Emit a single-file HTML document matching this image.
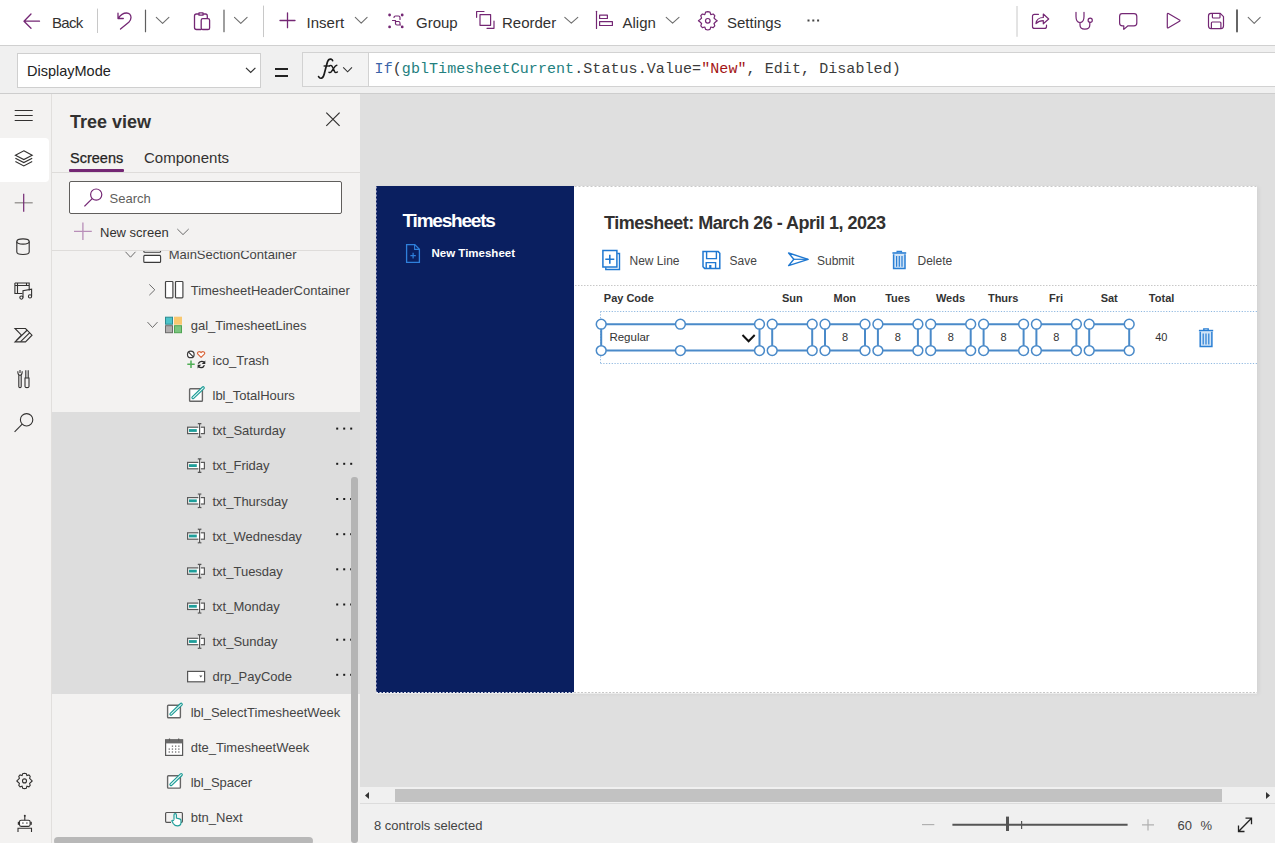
<!DOCTYPE html>
<html><head><meta charset="utf-8">
<style>
*{box-sizing:border-box;margin:0;padding:0}
html,body{width:1275px;height:843px;overflow:hidden;background:#fff;font-family:"Liberation Sans",sans-serif;color:#323130}
.a{position:absolute}
.t{position:absolute;white-space:pre;line-height:1}
svg{position:absolute;overflow:visible}
</style></head><body>

<!-- ===== TOP TOOLBAR ===== -->
<div class="a" style="left:0;top:0;width:1275px;height:46px;background:#fff;border-bottom:1px solid #d0d0d0"></div>

<div class="t" style="left:52px;top:15.3px;font-size:15px;color:#323130;letter-spacing:-0.7px">Back</div>
<svg style="left:0;top:0" width="1275" height="45" fill="none" stroke-linecap="round" stroke-linejoin="round">
 <g stroke="#742774" stroke-width="1.3">
  <path d="M24 21.2H39.5M31 14L24 21.2L31 28.3"/>
  <path d="M118 13.2V18.5H123.3M118.3 18.3C120.5 14.8 123.6 13 126.6 13C129.2 13 131 15 131 17.5C131 19.5 130 21 128.8 22.2L120.5 29"/>
  <path d="M198.5 14H196.5Q194.5 14 194.5 16V27.5Q194.5 29.5 196.5 29.5H201M203.5 14H205.5Q207.3 14 207.3 16V18.4M199 12.8H203V15.2H199Z"/>
  <rect x="201.2" y="18.6" width="8.4" height="10.9" rx="1.6"/>
  <path d="M280 20.5H295M287.5 12.8V27.7"/>
 </g>
 <g stroke="#742774" stroke-width="1.2">
  <path d="M394 17.5Q394 16 395.5 16H398.5Q400 16 400 17.5V19.5M396 21.5H398.5Q400 21.5 400 23V25M392.5 20.5H395.5V23.5Q395.5 25 397 25H400.5"/>
  <rect x="480" y="14.6" width="10.6" height="10.7"/>
  <path d="M476.6 17.3V11.5H484M494 21V28.3H487"/>
  <path d="M596.5 11.3V28.5"/>
  <rect x="599.6" y="15.2" width="7.8" height="3.3"/>
  <rect x="599.6" y="21.6" width="12.8" height="3.9"/>
 </g>
 <g fill="#742774" stroke="none">
  <circle cx="389.6" cy="15" r="1.4"/><circle cx="402.2" cy="15" r="1.4"/><circle cx="389.6" cy="26.9" r="1.4"/><circle cx="402.2" cy="26.9" r="1.4"/>
 </g>
 <g stroke="#6e6e6e" stroke-width="1.1">
  <path d="M156.3 17.3L162.6 23.4L168.9 17.3"/>
  <path d="M234.5 17.3L240.8 23.4L247.1 17.3"/>
  <path d="M355.3 17.3L361.2 23.2L367.1 17.3"/>
  <path d="M564.8 17.3L571.3 23.2L577.8 17.3"/>
  <path d="M666.2 17.3L672.6 23.2L679 17.3"/>
  <path d="M1248.2 17.3L1254.2 23.3L1260.2 17.3"/>
 </g>
 <g stroke="#742774" stroke-width="1.2">
  <path d="M707.8 11.6L710 12.2L710.8 14.6L713.2 14L714.8 15.7L714 18.1L715.8 19.8L717.2 20.8L715.8 21.8L714 23.5L714.8 25.9L713.2 27.6L710.8 27L710 29.4L707.8 30L705.6 29.4L704.8 27L702.4 27.6L700.8 25.9L701.6 23.5L699.8 21.8L698.4 20.8L699.8 19.8L701.6 18.1L700.8 15.7L702.4 14L704.8 14.6L705.6 12.2Z"/>
  <circle cx="707.8" cy="20.8" r="2.3"/>
 </g>
 <g fill="#444"><rect x="807.5" y="19.5" width="2" height="2"/><rect x="812.3" y="19.5" width="2" height="2"/><rect x="817.1" y="19.5" width="2" height="2"/></g>
 <g stroke="#c8c8c8" stroke-width="1"><path d="M97.5 9V32.6M263.5 6V36.7M1017 6.4V36.4"/></g>
 <g stroke="#5f5f5f" stroke-width="1.2"><path d="M145.5 10V31.7M224 10V31.7"/></g>
 <path d="M1237 10.2V31.4" stroke="#666" stroke-width="2"/>
 <g stroke="#742774" stroke-width="1.2">
  <path d="M1038.5 14.3H1034.5Q1032.5 14.3 1032.5 16.3V26.4Q1032.5 28.4 1034.5 28.4H1044.5Q1046.5 28.4 1046.5 26.4V25"/>
  <path d="M1036 23.5C1036.5 19.5 1039.5 17.5 1043.3 17.5V14L1048.7 19L1043.3 23.8V20.6C1040.5 20.6 1038 21.5 1036 23.5Z"/>
  <path d="M1076 12.3V16.5Q1076 22.5 1080 22.5Q1084 22.5 1084 16.5V12.3M1080 22.5V25Q1080 29.2 1084.8 29.2Q1089.8 29.2 1089.8 25V22.2"/>
  <circle cx="1090.2" cy="20.2" r="2.1"/>
  <path d="M1122 13.6H1134Q1136.8 13.6 1136.8 16.4V23Q1136.8 25.8 1134 25.8H1128L1123.8 29.4V25.8H1122.4Q1119.6 25.8 1119.6 23V16.4Q1119.6 13.6 1122 13.6Z"/>
  <path d="M1167.3 15V27.2Q1167.3 28.4 1168.4 27.8L1179.5 21.3Q1180.5 20.6 1179.5 19.9L1168.4 13.6Q1167.3 13 1167.3 14.2Z"/>
  <path d="M1211 13.4H1220.3L1223.5 16.6V26.1Q1223.5 28.6 1221 28.6H1211Q1208.5 28.6 1208.5 26.1V15.9Q1208.5 13.4 1211 13.4Z"/>
  <path d="M1212.4 13.6V17.2Q1212.4 18 1213.2 18H1219.2Q1220 18 1220 17.2V13.6M1211.4 28.4V22.9Q1211.4 22 1212.3 22H1220Q1220.9 22 1220.9 22.9V28.4"/>
 </g>
</svg>
<div class="t" style="left:306.6px;top:15.3px;font-size:15px;color:#323130">Insert</div>
<div class="t" style="left:416px;top:15.3px;font-size:15px;color:#323130">Group</div>
<div class="t" style="left:502px;top:15.3px;font-size:15px;color:#323130">Reorder</div>
<div class="t" style="left:622.5px;top:15.3px;font-size:15px;color:#323130">Align</div>
<div class="t" style="left:727px;top:15.3px;font-size:15px;color:#323130">Settings</div>


<!-- ===== FORMULA BAR ===== -->
<div class="a" style="left:0;top:46px;width:1275px;height:48px;background:#f0f0f0;border-bottom:1px solid #cdcdcd"></div>
<div class="a" style="left:17px;top:53px;width:244px;height:35px;background:#fff;border:1px solid #cfcfcf"></div>
<div class="t" style="left:27px;top:63.8px;font-size:14.5px;color:#222">DisplayMode</div>
<div class="a" style="left:274.5px;top:67.5px;width:13.5px;height:2px;background:#222"></div>
<div class="a" style="left:274.5px;top:74.5px;width:13.5px;height:2px;background:#222"></div>
<div class="a" style="left:302px;top:52px;width:67px;height:35px;background:#f3f3f3;border:1px solid #d2d2d2"></div>
<div class="a" style="left:368px;top:52px;width:910px;height:35px;background:#fff;border:1px solid #d2d2d2"></div>
<div class="t" style="left:374.6px;top:62px;font-family:'Liberation Mono',monospace;font-size:15px;letter-spacing:0.07px;color:#3b3b3b"><span style="color:#3a64a8">If</span>(<span style="color:#23807e">gblTimesheetCurrent</span>.Status.Value=<span style="color:#a31515">"New"</span>, Edit, Disabled)</div>

<!-- ===== LEFT RAIL ===== -->
<div class="a" style="left:0;top:94px;width:52px;height:749px;background:#f3f2f1;border-right:1px solid #e1dfdd"></div>
<div class="a" style="left:0;top:138px;width:49px;height:44px;background:#fff;border-radius:0 4px 4px 0"></div>

<!-- ===== TREE PANEL ===== -->
<div class="a" style="left:52px;top:94px;width:308px;height:749px;background:#f3f2f1"></div>
<div class="t" style="left:70px;top:112.6px;font-size:18px;font-weight:700;color:#323130">Tree view</div>
<div class="t" style="left:70px;top:151px;font-size:14.5px;color:#252423;-webkit-text-stroke:0.25px #252423">Screens</div>
<div class="t" style="left:144px;top:150.4px;font-size:15px;color:#323130">Components</div>
<div class="a" style="left:69px;top:169px;width:55px;height:3px;background:#742774;border-radius:1px"></div>
<div class="a" style="left:52px;top:172px;width:308px;height:1px;background:#dedcda"></div>
<div class="a" style="left:69px;top:181px;width:273px;height:33px;background:#fff;border:1px solid #605e5c;border-radius:2px"></div>
<div class="t" style="left:109.5px;top:192.2px;font-size:13px;color:#605e5c">Search</div>
<div class="t" style="left:100px;top:226.2px;font-size:13px;color:#323130">New screen</div>
<div class="a" style="left:52px;top:250px;width:308px;height:1px;background:#dedcda"></div>

<!-- tree rows -->
<div class="a" style="left:52px;top:251px;width:308px;height:592px;overflow:hidden">
  <div class="a" style="left:0;top:161px;width:308px;height:282px;background:#dddddd"></div>
  <div class="t" style="left:116.7px;top:-2.6px;font-size:13px;color:#444">MainSectionContainer</div>
<div class="t" style="left:138.7px;top:32.6px;font-size:13px;color:#444">TimesheetHeaderContainer</div>
<div class="t" style="left:138.7px;top:67.7px;font-size:13px;color:#444">gal_TimesheetLines</div>
<div class="t" style="left:160.5px;top:102.9px;font-size:13px;color:#444">ico_Trash</div>
<div class="t" style="left:160.5px;top:138.1px;font-size:13px;color:#444">lbl_TotalHours</div>
<div class="t" style="left:160.5px;top:173.2px;font-size:13px;color:#444">txt_Saturday</div>
<div class="t" style="left:160.5px;top:208.4px;font-size:13px;color:#444">txt_Friday</div>
<div class="t" style="left:160.5px;top:243.6px;font-size:13px;color:#444">txt_Thursday</div>
<div class="t" style="left:160.5px;top:278.8px;font-size:13px;color:#444">txt_Wednesday</div>
<div class="t" style="left:160.5px;top:313.9px;font-size:13px;color:#444">txt_Tuesday</div>
<div class="t" style="left:160.5px;top:349.1px;font-size:13px;color:#444">txt_Monday</div>
<div class="t" style="left:160.5px;top:384.3px;font-size:13px;color:#444">txt_Sunday</div>
<div class="t" style="left:160.5px;top:419.4px;font-size:13px;color:#444">drp_PayCode</div>
<div class="t" style="left:138.7px;top:454.6px;font-size:13px;color:#444">lbl_SelectTimesheetWeek</div>
<div class="t" style="left:138.7px;top:489.8px;font-size:13px;color:#444">dte_TimesheetWeek</div>
<div class="t" style="left:138.7px;top:524.9px;font-size:13px;color:#444">lbl_Spacer</div>
<div class="t" style="left:138.7px;top:560.1px;font-size:13px;color:#444">btn_Next</div>
<svg style="left:-52px;top:-251px" width="1275" height="843"><path d="M125.5 251.8L130.5 257.2L135.5 251.8" stroke="#6b6b6b" stroke-width="1" fill="none"/><rect x="143.8" y="246" width="16.8" height="6.2" rx="1" fill="#fff" stroke="#3a3a3a" stroke-width="1.1"/><rect x="143.8" y="255.4" width="16.8" height="7" rx="1" fill="#fff" stroke="#3a3a3a" stroke-width="1.1"/><path d="M149.3 284.4L154.8 289.8L149.3 295.2" stroke="#6b6b6b" stroke-width="1" fill="none"/><rect x="165.5" y="281.5" width="7.4" height="16.4" rx="0.8" fill="#fff" stroke="#444" stroke-width="1.2"/><rect x="175.5" y="281.5" width="7.4" height="16.4" rx="0.8" fill="#fff" stroke="#444" stroke-width="1.2"/><path d="M147.5 322.1L152.5 327.5L157.5 322.1" stroke="#6b6b6b" stroke-width="1" fill="none"/><rect x="165.5" y="317.2" width="7" height="7" fill="#4cc3c9" stroke="#2b8a8f" stroke-width="1"/><rect x="174" y="316.7" width="8" height="8" fill="#f8c870"/><rect x="165.5" y="325.7" width="7" height="7" fill="#b0aeae" stroke="#6a6a6a" stroke-width="1"/><rect x="174.5" y="325.7" width="7" height="7" fill="#7cc47f" stroke="#4ea552" stroke-width="1"/><circle cx="190.8" cy="354.4" r="3.3" fill="#fff" stroke="#3a3a3a" stroke-width="1.2"/><path d="M188.5 352.1L193.1 356.7" stroke="#3a3a3a" stroke-width="1.2"/><path d="M201.1 357.4L197.9 354.2Q196.9 352.9 198.2 352Q199.8 351.1 201.1 352.7Q202.4 351.1 204 352Q205.3 352.9 204.3 354.2Z" fill="#fff" stroke="#d9683e" stroke-width="1.2" stroke-linejoin="round"/><path d="M187.3 364.3H194.7M191 360.6V368" stroke="#4fae55" stroke-width="1.5"/><path d="M198.3 363.6Q199.4 361.3 201.6 361.3Q203.2 361.3 204.2 362.3M204.4 365.2Q203.4 367.6 201.2 367.6Q199.6 367.6 198.6 366.6" fill="none" stroke="#2a2a2a" stroke-width="1.3"/><path d="M205.3 360.4V364.1H201.7Z M197.6 368.4V364.7H201.2Z" fill="#2a2a2a"/><rect x="189.6" y="388.8" width="12.8" height="12.4" rx="0.8" fill="#fff" stroke="#666" stroke-width="1.4"/><path d="M193.0 397.6L203.2 387.8" stroke="#1c9c96" stroke-width="3.3" stroke-linecap="round"/><path d="M193.0 397.6L203.2 387.8" stroke="#e6f7f6" stroke-width="1.1" stroke-linecap="round"/><rect x="187.6" y="427.2" width="16.8" height="6.4" fill="#fff" stroke="#5a5a5a" stroke-width="1.2"/><rect x="189" y="429.1" width="7.8" height="2.8" fill="#1f9e9a"/><rect x="198.4" y="425.4" width="2.4" height="10" fill="#fff"/><path d="M199.6 423.8V437.1M197.8 423.6Q199.6 423.8 201.4 423.6M197.8 437.2Q199.6 437.1 201.4 437.2" fill="none" stroke="#555" stroke-width="1.2"/><rect x="187.6" y="462.4" width="16.8" height="6.4" fill="#fff" stroke="#5a5a5a" stroke-width="1.2"/><rect x="189" y="464.2" width="7.8" height="2.8" fill="#1f9e9a"/><rect x="198.4" y="460.6" width="2.4" height="10" fill="#fff"/><path d="M199.6 459.0V472.2M197.8 458.8Q199.6 459.0 201.4 458.8M197.8 472.4Q199.6 472.2 201.4 472.4" fill="none" stroke="#555" stroke-width="1.2"/><rect x="187.6" y="497.6" width="16.8" height="6.4" fill="#fff" stroke="#5a5a5a" stroke-width="1.2"/><rect x="189" y="499.4" width="7.8" height="2.8" fill="#1f9e9a"/><rect x="198.4" y="495.8" width="2.4" height="10" fill="#fff"/><path d="M199.6 494.2V507.4M197.8 494.0Q199.6 494.2 201.4 494.0M197.8 507.6Q199.6 507.4 201.4 507.6" fill="none" stroke="#555" stroke-width="1.2"/><rect x="187.6" y="532.8" width="16.8" height="6.4" fill="#fff" stroke="#5a5a5a" stroke-width="1.2"/><rect x="189" y="534.6" width="7.8" height="2.8" fill="#1f9e9a"/><rect x="198.4" y="531.0" width="2.4" height="10" fill="#fff"/><path d="M199.6 529.4V542.6M197.8 529.2Q199.6 529.4 201.4 529.2M197.8 542.8Q199.6 542.6 201.4 542.8" fill="none" stroke="#555" stroke-width="1.2"/><rect x="187.6" y="567.9" width="16.8" height="6.4" fill="#fff" stroke="#5a5a5a" stroke-width="1.2"/><rect x="189" y="569.7" width="7.8" height="2.8" fill="#1f9e9a"/><rect x="198.4" y="566.1" width="2.4" height="10" fill="#fff"/><path d="M199.6 564.5V577.7M197.8 564.3Q199.6 564.5 201.4 564.3M197.8 577.9Q199.6 577.7 201.4 577.9" fill="none" stroke="#555" stroke-width="1.2"/><rect x="187.6" y="603.1" width="16.8" height="6.4" fill="#fff" stroke="#5a5a5a" stroke-width="1.2"/><rect x="189" y="604.9" width="7.8" height="2.8" fill="#1f9e9a"/><rect x="198.4" y="601.3" width="2.4" height="10" fill="#fff"/><path d="M199.6 599.7V612.9M197.8 599.5Q199.6 599.7 201.4 599.5M197.8 613.1Q199.6 612.9 201.4 613.1" fill="none" stroke="#555" stroke-width="1.2"/><rect x="187.6" y="638.3" width="16.8" height="6.4" fill="#fff" stroke="#5a5a5a" stroke-width="1.2"/><rect x="189" y="640.1" width="7.8" height="2.8" fill="#1f9e9a"/><rect x="198.4" y="636.5" width="2.4" height="10" fill="#fff"/><path d="M199.6 634.9V648.1M197.8 634.7Q199.6 634.9 201.4 634.7M197.8 648.3Q199.6 648.1 201.4 648.3" fill="none" stroke="#555" stroke-width="1.2"/><rect x="187.6" y="671.4" width="17" height="10.4" fill="#fff" stroke="#555" stroke-width="1.2"/><path d="M199.2 675.6H202.4L200.8 677.4Z" fill="#555"/><rect x="167.6" y="705.3" width="12.8" height="12.4" rx="0.8" fill="#fff" stroke="#666" stroke-width="1.4"/><path d="M171.0 714.1L181.2 704.3" stroke="#1c9c96" stroke-width="3.3" stroke-linecap="round"/><path d="M171.0 714.1L181.2 704.3" stroke="#e6f7f6" stroke-width="1.1" stroke-linecap="round"/><rect x="165.6" y="739.8" width="17" height="15.6" fill="#fff" stroke="#5a5a5a" stroke-width="1.2"/><rect x="165.6" y="739.8" width="17" height="3.6" fill="#6a6a6a"/><path d="M169.5 738.4V740.8M178.7 738.4V740.8" stroke="#5a5a5a" stroke-width="1.2"/><rect x="171.8" y="745.4" width="1.3" height="1.6" fill="#888"/><rect x="175.0" y="745.4" width="1.3" height="1.6" fill="#888"/><rect x="178.2" y="745.4" width="1.3" height="1.6" fill="#888"/><rect x="168.6" y="748.3" width="1.3" height="1.6" fill="#888"/><rect x="171.8" y="748.3" width="1.3" height="1.6" fill="#888"/><rect x="175.0" y="748.3" width="1.3" height="1.6" fill="#888"/><rect x="178.2" y="748.3" width="1.3" height="1.6" fill="#888"/><rect x="168.6" y="751.2" width="1.3" height="1.6" fill="#888"/><rect x="171.8" y="751.2" width="1.3" height="1.6" fill="#888"/><rect x="175.0" y="751.2" width="1.3" height="1.6" fill="#888"/><rect x="178.2" y="751.2" width="1.3" height="1.6" fill="#888"/><rect x="167.6" y="775.7" width="12.8" height="12.4" rx="0.8" fill="#fff" stroke="#666" stroke-width="1.4"/><path d="M171.0 784.5L181.2 774.7" stroke="#1c9c96" stroke-width="3.3" stroke-linecap="round"/><path d="M171.0 784.5L181.2 774.7" stroke="#e6f7f6" stroke-width="1.1" stroke-linecap="round"/><path d="M171 822.3H166.6Q165.6 822.3 165.6 821.3V813.5Q165.6 812.5 166.6 812.5H181.4Q182.4 812.5 182.4 813.5V821.3Q182.4 822.3 181.4 822.3H180" fill="none" stroke="#555" stroke-width="1.2"/><path d="M174 819.8V815.1Q174 813.7 175.2 813.7Q176.4 813.7 176.4 815.1V818.1L179.6 818.9Q181 819.3 181 820.7V822.5Q181 825.9 177.4 825.9Q174.6 825.9 173.2 823.5L171.8 820.9Q172.6 819.7 174 820.7" fill="#fff" stroke="#1f9e9a" stroke-width="1.2"/><rect x="336.2" y="427.6" width="2" height="2" fill="#1b1b1b"/><rect x="343.2" y="427.6" width="2" height="2" fill="#1b1b1b"/><rect x="350.2" y="427.6" width="2" height="2" fill="#1b1b1b"/><rect x="336.2" y="462.8" width="2" height="2" fill="#1b1b1b"/><rect x="343.2" y="462.8" width="2" height="2" fill="#1b1b1b"/><rect x="350.2" y="462.8" width="2" height="2" fill="#1b1b1b"/><rect x="336.2" y="498.0" width="2" height="2" fill="#1b1b1b"/><rect x="343.2" y="498.0" width="2" height="2" fill="#1b1b1b"/><rect x="350.2" y="498.0" width="2" height="2" fill="#1b1b1b"/><rect x="336.2" y="533.2" width="2" height="2" fill="#1b1b1b"/><rect x="343.2" y="533.2" width="2" height="2" fill="#1b1b1b"/><rect x="350.2" y="533.2" width="2" height="2" fill="#1b1b1b"/><rect x="336.2" y="568.3" width="2" height="2" fill="#1b1b1b"/><rect x="343.2" y="568.3" width="2" height="2" fill="#1b1b1b"/><rect x="350.2" y="568.3" width="2" height="2" fill="#1b1b1b"/><rect x="336.2" y="603.5" width="2" height="2" fill="#1b1b1b"/><rect x="343.2" y="603.5" width="2" height="2" fill="#1b1b1b"/><rect x="350.2" y="603.5" width="2" height="2" fill="#1b1b1b"/><rect x="336.2" y="638.7" width="2" height="2" fill="#1b1b1b"/><rect x="343.2" y="638.7" width="2" height="2" fill="#1b1b1b"/><rect x="350.2" y="638.7" width="2" height="2" fill="#1b1b1b"/><rect x="336.2" y="673.8" width="2" height="2" fill="#1b1b1b"/><rect x="343.2" y="673.8" width="2" height="2" fill="#1b1b1b"/><rect x="350.2" y="673.8" width="2" height="2" fill="#1b1b1b"/></svg>
</div>


<!-- formula bar icons -->
<svg style="left:0;top:0" width="1275" height="843" fill="none">
 <path d="M246 67.8L250.7 72.5L255.4 67.8" stroke="#333" stroke-width="1.2"/>
 <path d="M343.2 67.4L347.6 71.8L352 67.4" stroke="#333" stroke-width="1.1"/>
</svg>
<svg style="left:0;top:0" width="400" height="100" fill="none">
 <path d="M318.6 76.6Q319.6 78.6 321.4 78.2Q323.6 77.6 324.6 72.5L327.4 62Q328.6 58.6 331.2 59.2Q332.4 59.6 332.6 60.6" stroke="#1a1a1a" stroke-width="1.7" stroke-linecap="round"/>
 <path d="M323.6 66H330" stroke="#1a1a1a" stroke-width="1.4"/>
 <path d="M329.8 65.6Q331.6 64.8 332.6 67.2L334.6 71.6Q335.6 73.4 337.4 72M336.8 65.2Q335.4 65.2 333.6 68.4L331.4 71.6Q330.4 73 329 72.4" stroke="#1a1a1a" stroke-width="1.5" stroke-linecap="round"/>
</svg>

<!-- rail icons -->
<svg style="left:0;top:0" width="52" height="843" fill="none" stroke-linecap="butt">
 <g stroke="#323130" stroke-width="1.1">
  <path d="M14.7 110.5H32.7M14.7 115.5H32.7M14.7 120.5H32.7"/>
  <path d="M23.8 150.8L32.2 155.2L23.8 159.6L15.4 155.2Z"/>
  <path d="M15.4 158.2L23.8 162.6L32.2 158.2"/>
  <path d="M15.4 161.4L23.8 165.9L32.2 161.4"/>
  <path d="M16.8 241.5V252Q16.8 254.5 23 254.5Q29.2 254.5 29.2 252V241.5"/>
  <ellipse cx="23" cy="241.5" rx="6.2" ry="2.6"/>
  <path d="M14.9 283H29.2V290.5M14.9 283V293.5H22.5M14.9 285.5H29.2M17.5 283V293.5M26.5 283V285.5"/>
  <path d="M23 297.5V290.8L31.6 289.2V296.3"/>
  <circle cx="21.4" cy="297.6" r="1.6"/><circle cx="30" cy="296.4" r="1.6"/>
  <path d="M15 328.5H25.5L32 335.2L25.5 341.9H15L21.5 335.2Z"/>
  <path d="M16.6 340.4L27.3 330M20.6 341.6L29.8 332.6"/>
  <path d="M18.8 375.2V386.5Q18.8 387.6 20 387.6Q21.2 387.6 21.2 386.5V375.2M17.8 371.2Q17.8 375.2 20 375.2Q22.2 375.2 22.2 371.2M20 370V373"/>
  <path d="M25.8 370.2V378M28.2 370.2V378M25 378H29V386.5Q29 387.6 27 387.6Q25 387.6 25 386.5Z"/>
  <circle cx="26.6" cy="419.8" r="6.2"/>
  <path d="M22.2 424.2L14.6 431.8"/>
 </g>
 <path d="M14.7 202.8H32.7" stroke="#8a8886" stroke-width="1.2"/>
 <path d="M23.7 193.8V211.8" stroke="#742774" stroke-width="1.2"/>
 <g stroke="#323130" stroke-width="1.1">
  <path d="M24.5 773.2L26.3 773.6L26.9 775.6L28.9 775L30.2 776.4L29.6 778.4L31.1 779.8L32.2 780.9L31.1 782L29.6 783.4L30.2 785.4L28.9 786.8L26.9 786.2L26.3 788.2L24.5 788.6L22.7 788.2L22.1 786.2L20.1 786.8L18.8 785.4L19.4 783.4L17.9 782L16.8 780.9L17.9 779.8L19.4 778.4L18.8 776.4L20.1 775L22.1 775.6L22.7 773.6Z"/>
  <circle cx="24.5" cy="780.9" r="2"/>
  <rect x="19.5" y="820.2" width="10.6" height="6.2" rx="1.6" fill="#fff"/>
  <path d="M24.8 816V820.2M18 832V828.2H31.5V832"/>
 </g>
 <g fill="#323130"><rect x="22.3" y="822.4" width="1.2" height="1.3"/><rect x="26.3" y="822.4" width="1.2" height="1.3"/><rect x="17.8" y="821.8" width="1.5" height="3"/><rect x="30.3" y="821.8" width="1.5" height="3"/><circle cx="24.8" cy="815.8" r="1"/></g>
</svg>

<!-- tree panel header icons -->
<svg style="left:0;top:0" width="1275" height="843" fill="none">
 <path d="M326.3 112.6L339.6 125.9M339.6 112.6L326.3 125.9" stroke="#323130" stroke-width="1.2"/>
 <circle cx="96.2" cy="194.6" r="5.6" stroke="#742774" stroke-width="1.2"/>
 <path d="M92.2 198.6L84.4 206.4" stroke="#742774" stroke-width="1.3"/>
 <path d="M74 231.3H91.8M82.9 222.6V240" stroke="#b88eb8" stroke-width="1.3"/>
 <path d="M177.3 229L183 234.6L188.7 229" stroke="#6b6b6b" stroke-width="1"/>
</svg>
<!-- tree scrollbars -->
<div class="a" style="left:351.2px;top:477px;width:6.7px;height:366px;background:#b4b4b4;border-radius:3px"></div>
<div class="a" style="left:54px;top:837px;width:258.5px;height:8px;background:#b8b8b8;border-radius:4px"></div>

<!-- ===== CANVAS ===== -->
<div class="a" style="left:360px;top:94px;width:915px;height:693px;background:#dfdfdf"></div>
<div class="a" style="left:376px;top:186px;width:881px;height:507px;background:#fff;box-shadow:2px 1px 4px rgba(0,0,0,0.06)"></div>
<div class="a" style="left:376px;top:186px;width:198px;height:507px;background:#0a1f60;box-shadow:none"></div>
<div class="t" style="left:402.5px;top:210.9px;font-size:19px;font-weight:700;color:#fff;letter-spacing:-1.2px">Timesheets</div>
<div class="t" style="left:431.5px;top:248.1px;font-size:11.5px;font-weight:700;color:#fff">New Timesheet</div>
<div class="t" style="left:604px;top:213.5px;font-size:18px;font-weight:700;color:#323130;letter-spacing:-0.5px">Timesheet: March 26 - April 1, 2023</div>
<div class="t" style="left:629.5px;top:255.4px;font-size:12px;color:#444">New Line</div>
<div class="t" style="left:729.5px;top:255.4px;font-size:12px;color:#444">Save</div>
<div class="t" style="left:817px;top:255.4px;font-size:12px;color:#444">Submit</div>
<div class="t" style="left:917.5px;top:255.4px;font-size:12px;color:#444">Delete</div>

<!-- ===== STATUS BAR ===== -->
<div class="a" style="left:360px;top:787px;width:915px;height:16px;background:#f0f0f0"></div>
<div class="a" style="left:395px;top:789px;width:827px;height:13px;background:#c2c2c2"></div>
<div class="a" style="left:360px;top:803px;width:915px;height:40px;background:#f0f0f0;border-top:1px solid #dcdcdc"></div>
<div class="t" style="left:374px;top:819px;font-size:13px;color:#444">8 controls selected</div>


<div class="t" style="left:609.4px;top:331.9px;font-size:11.5px;color:#333">Regular</div>
<div class="t" style="left:603.8px;top:292.8px;font-size:11px;font-weight:700;color:#333">Pay Code</div><div class="t" style="left:752.3px;width:80px;text-align:center;top:292.8px;font-size:11px;font-weight:700;color:#333">Sun</div><div class="t" style="left:804.8px;width:80px;text-align:center;top:292.8px;font-size:11px;font-weight:700;color:#333">Mon</div><div class="t" style="left:857.6px;width:80px;text-align:center;top:292.8px;font-size:11px;font-weight:700;color:#333">Tues</div><div class="t" style="left:910.5px;width:80px;text-align:center;top:292.8px;font-size:11px;font-weight:700;color:#333">Weds</div><div class="t" style="left:963.2px;width:80px;text-align:center;top:292.8px;font-size:11px;font-weight:700;color:#333">Thurs</div><div class="t" style="left:1016.1px;width:80px;text-align:center;top:292.8px;font-size:11px;font-weight:700;color:#333">Fri</div><div class="t" style="left:1069.2px;width:80px;text-align:center;top:292.8px;font-size:11px;font-weight:700;color:#333">Sat</div><div class="t" style="left:1121.6px;width:80px;text-align:center;top:292.8px;font-size:11px;font-weight:700;color:#333">Total</div>
<div class="t" style="left:825.0px;width:40px;text-align:center;top:331.9px;font-size:11px;color:#333">8</div><div class="t" style="left:877.9px;width:40px;text-align:center;top:331.9px;font-size:11px;color:#333">8</div><div class="t" style="left:930.7px;width:40px;text-align:center;top:331.9px;font-size:11px;color:#333">8</div><div class="t" style="left:983.6px;width:40px;text-align:center;top:331.9px;font-size:11px;color:#333">8</div><div class="t" style="left:1036.4px;width:40px;text-align:center;top:331.9px;font-size:11px;color:#333">8</div><div class="t" style="left:1141.3px;width:40px;text-align:center;top:331.9px;font-size:11px;color:#333">40</div>
<svg style="left:0;top:0" width="1275" height="843" fill="none">
 <path d="M574.5 186.5H1257" stroke="#c9c9c9" stroke-width="1" stroke-dasharray="2 2"/>
 <path d="M376.5 186.5V693" stroke="#8a8fb8" stroke-width="1" stroke-dasharray="2 2"/>
 <path d="M376 692.5H574" stroke="#dfe3f0" stroke-width="1" stroke-dasharray="2 1.5"/><path d="M574 692.5H1257" stroke="#c8c8c8" stroke-width="1" stroke-dasharray="2 1.5"/><path d="M376 693.5H1257" stroke="#ececec" stroke-width="1"/>
 <path d="M575 285.5H1257" stroke="#c8c8c8" stroke-width="1" stroke-dasharray="1.5 1.5"/>
 <path d="M600.5 311.5H1257M600.5 363.5H1257M600.5 311.5V363.5" stroke="#8fb8e0" stroke-width="1" stroke-dasharray="1.2 1.6"/>
 <path d="M601.2 324.2H759.5M601.2 350.6H759.5M601.2 324.2V350.6M759.5 324.2V350.6" stroke="#4a8ac9" stroke-width="2"/><path d="M772.2 324.2H812.2M772.2 350.6H812.2M772.2 324.2V350.6M812.2 324.2V350.6" stroke="#4a8ac9" stroke-width="2"/><path d="M825.0 324.2H865.0M825.0 350.6H865.0M825.0 324.2V350.6M865.0 324.2V350.6" stroke="#4a8ac9" stroke-width="2"/><path d="M877.9 324.2H917.9M877.9 350.6H917.9M877.9 324.2V350.6M917.9 324.2V350.6" stroke="#4a8ac9" stroke-width="2"/><path d="M930.7 324.2H970.7M930.7 350.6H970.7M930.7 324.2V350.6M970.7 324.2V350.6" stroke="#4a8ac9" stroke-width="2"/><path d="M983.6 324.2H1023.6M983.6 350.6H1023.6M983.6 324.2V350.6M1023.6 324.2V350.6" stroke="#4a8ac9" stroke-width="2"/><path d="M1036.4 324.2H1076.4M1036.4 350.6H1076.4M1036.4 324.2V350.6M1076.4 324.2V350.6" stroke="#4a8ac9" stroke-width="2"/><path d="M1089.2 324.2H1129.2M1089.2 350.6H1129.2M1089.2 324.2V350.6M1129.2 324.2V350.6" stroke="#4a8ac9" stroke-width="2"/>
 <circle cx="601.2" cy="324.2" r="4.9" fill="#fff" stroke="#4a8ac9" stroke-width="1.5"/><circle cx="601.2" cy="350.6" r="4.9" fill="#fff" stroke="#4a8ac9" stroke-width="1.5"/><circle cx="680.4" cy="324.2" r="4.9" fill="#fff" stroke="#4a8ac9" stroke-width="1.5"/><circle cx="680.4" cy="350.6" r="4.9" fill="#fff" stroke="#4a8ac9" stroke-width="1.5"/><circle cx="759.5" cy="324.2" r="4.9" fill="#fff" stroke="#4a8ac9" stroke-width="1.5"/><circle cx="759.5" cy="350.6" r="4.9" fill="#fff" stroke="#4a8ac9" stroke-width="1.5"/><circle cx="772.2" cy="324.2" r="4.9" fill="#fff" stroke="#4a8ac9" stroke-width="1.5"/><circle cx="772.2" cy="350.6" r="4.9" fill="#fff" stroke="#4a8ac9" stroke-width="1.5"/><circle cx="812.2" cy="324.2" r="4.9" fill="#fff" stroke="#4a8ac9" stroke-width="1.5"/><circle cx="812.2" cy="350.6" r="4.9" fill="#fff" stroke="#4a8ac9" stroke-width="1.5"/><circle cx="825.0" cy="324.2" r="4.9" fill="#fff" stroke="#4a8ac9" stroke-width="1.5"/><circle cx="825.0" cy="350.6" r="4.9" fill="#fff" stroke="#4a8ac9" stroke-width="1.5"/><circle cx="865.0" cy="324.2" r="4.9" fill="#fff" stroke="#4a8ac9" stroke-width="1.5"/><circle cx="865.0" cy="350.6" r="4.9" fill="#fff" stroke="#4a8ac9" stroke-width="1.5"/><circle cx="877.9" cy="324.2" r="4.9" fill="#fff" stroke="#4a8ac9" stroke-width="1.5"/><circle cx="877.9" cy="350.6" r="4.9" fill="#fff" stroke="#4a8ac9" stroke-width="1.5"/><circle cx="917.9" cy="324.2" r="4.9" fill="#fff" stroke="#4a8ac9" stroke-width="1.5"/><circle cx="917.9" cy="350.6" r="4.9" fill="#fff" stroke="#4a8ac9" stroke-width="1.5"/><circle cx="930.7" cy="324.2" r="4.9" fill="#fff" stroke="#4a8ac9" stroke-width="1.5"/><circle cx="930.7" cy="350.6" r="4.9" fill="#fff" stroke="#4a8ac9" stroke-width="1.5"/><circle cx="970.7" cy="324.2" r="4.9" fill="#fff" stroke="#4a8ac9" stroke-width="1.5"/><circle cx="970.7" cy="350.6" r="4.9" fill="#fff" stroke="#4a8ac9" stroke-width="1.5"/><circle cx="983.6" cy="324.2" r="4.9" fill="#fff" stroke="#4a8ac9" stroke-width="1.5"/><circle cx="983.6" cy="350.6" r="4.9" fill="#fff" stroke="#4a8ac9" stroke-width="1.5"/><circle cx="1023.6" cy="324.2" r="4.9" fill="#fff" stroke="#4a8ac9" stroke-width="1.5"/><circle cx="1023.6" cy="350.6" r="4.9" fill="#fff" stroke="#4a8ac9" stroke-width="1.5"/><circle cx="1036.4" cy="324.2" r="4.9" fill="#fff" stroke="#4a8ac9" stroke-width="1.5"/><circle cx="1036.4" cy="350.6" r="4.9" fill="#fff" stroke="#4a8ac9" stroke-width="1.5"/><circle cx="1076.4" cy="324.2" r="4.9" fill="#fff" stroke="#4a8ac9" stroke-width="1.5"/><circle cx="1076.4" cy="350.6" r="4.9" fill="#fff" stroke="#4a8ac9" stroke-width="1.5"/><circle cx="1089.2" cy="324.2" r="4.9" fill="#fff" stroke="#4a8ac9" stroke-width="1.5"/><circle cx="1089.2" cy="350.6" r="4.9" fill="#fff" stroke="#4a8ac9" stroke-width="1.5"/><circle cx="1129.2" cy="324.2" r="4.9" fill="#fff" stroke="#4a8ac9" stroke-width="1.5"/><circle cx="1129.2" cy="350.6" r="4.9" fill="#fff" stroke="#4a8ac9" stroke-width="1.5"/>
 <path d="M742.5 335L748.6 341.2L754.7 335" stroke="#111" stroke-width="2"/>
 <!-- new timesheet doc -->
 <path d="M406.6 244.6H414.8L419.4 249.2V262.4H406.6Z" stroke="#2f80dc" stroke-width="1.3"/>
 <path d="M414.6 244.8V249.4H419.2" stroke="#2f80dc" stroke-width="1.1"/>
 <path d="M410.4 255.6H415.8M413.1 252.8V258.4" stroke="#2f80dc" stroke-width="1.2"/>
 <!-- new line -->
 <path d="M617.2 253.5H619.5V269.5H605.8V267.2" stroke="#1f78d1" stroke-width="1.4"/>
 <rect x="602.9" y="250.5" width="14" height="16.5" stroke="#1f78d1" stroke-width="1.5" fill="#fff"/>
 <path d="M605.3 259.2H614.3M609.8 254.8V263.8" stroke="#1f78d1" stroke-width="1.6"/>
 <!-- save -->
 <path d="M703 251.6H718.2L719.8 253.2V268.4H704.6L703 266.8Z" stroke="#1f78d1" stroke-width="1.5"/>
 <path d="M706.6 251.6V258.6H716.4V251.6" stroke="#1f78d1" stroke-width="1.4"/>
 <path d="M706.2 268.4V262.6H715.6V268.4" stroke="#1f78d1" stroke-width="1.4"/>
 <rect x="709.2" y="265" width="2.2" height="3.4" fill="#1f78d1"/>
 <!-- submit -->
 <path d="M788.6 253L808.2 259.3L788.6 265.6L793.8 259.3Z" stroke="#1f78d1" stroke-width="1.4" stroke-linejoin="round"/>
 <path d="M793.8 259.3H808" stroke="#1f78d1" stroke-width="1.2"/>
 <!-- delete -->
 <g id="trash">
 <path d="M892.4 253H906.2" stroke="#2a7fd4" stroke-width="1.6"/>
 <path d="M897.2 252.6V251.4H901.4V252.6" stroke="#2a7fd4" stroke-width="1.4"/>
 <path d="M893.6 254.2V268.6H905V254.2" stroke="#2a7fd4" stroke-width="1.5" fill="#cfe3f7"/>
 <path d="M896.6 256V266.8M899.3 256V266.8M902 256V266.8" stroke="#2a7fd4" stroke-width="1.2"/>
 </g>
 <!-- row trash -->
 <path d="M1198.9 330.6H1213.2" stroke="#2a7fd4" stroke-width="1.6"/>
 <path d="M1203.8 330.2V328.9H1208.2V330.2" stroke="#2a7fd4" stroke-width="1.4"/>
 <path d="M1200.2 331.8V346.4H1211.9V331.8" stroke="#2a7fd4" stroke-width="1.5" fill="#cfe3f7"/>
 <path d="M1203.2 333.6V344.6M1206 333.6V344.6M1208.8 333.6V344.6" stroke="#2a7fd4" stroke-width="1.2"/>
</svg>

<!-- status bar controls -->
<svg style="left:0;top:0" width="1275" height="843" fill="none">
 <path d="M365 795.5L369 792V799Z" fill="#333"/>
 <path d="M1270 795.5L1266 792V799Z" fill="#333"/>
 <path d="M922 824.6H934.3" stroke="#b0b0b0" stroke-width="1.2"/>
 <path d="M952.4 824.8H1127.6" stroke="#555" stroke-width="2"/>
 <rect x="1006" y="816.6" width="3" height="14.4" fill="#555"/>
 <rect x="1021" y="821" width="1.2" height="8" fill="#555"/>
 <path d="M1142 824.8H1154M1148 819.2V830.4" stroke="#b0b0b0" stroke-width="1.2"/>
 <path d="M1238.5 831.5L1251.5 818.2M1238.5 825.5V831.5H1244.5M1245.5 818.2H1251.5V824.2" stroke="#222" stroke-width="1.3"/>
</svg>
<div class="t" style="left:1177.5px;top:819.0px;font-size:13px;color:#444">60</div>
<div class="t" style="left:1200.5px;top:819.0px;font-size:13px;color:#444">%</div>

</body></html>
